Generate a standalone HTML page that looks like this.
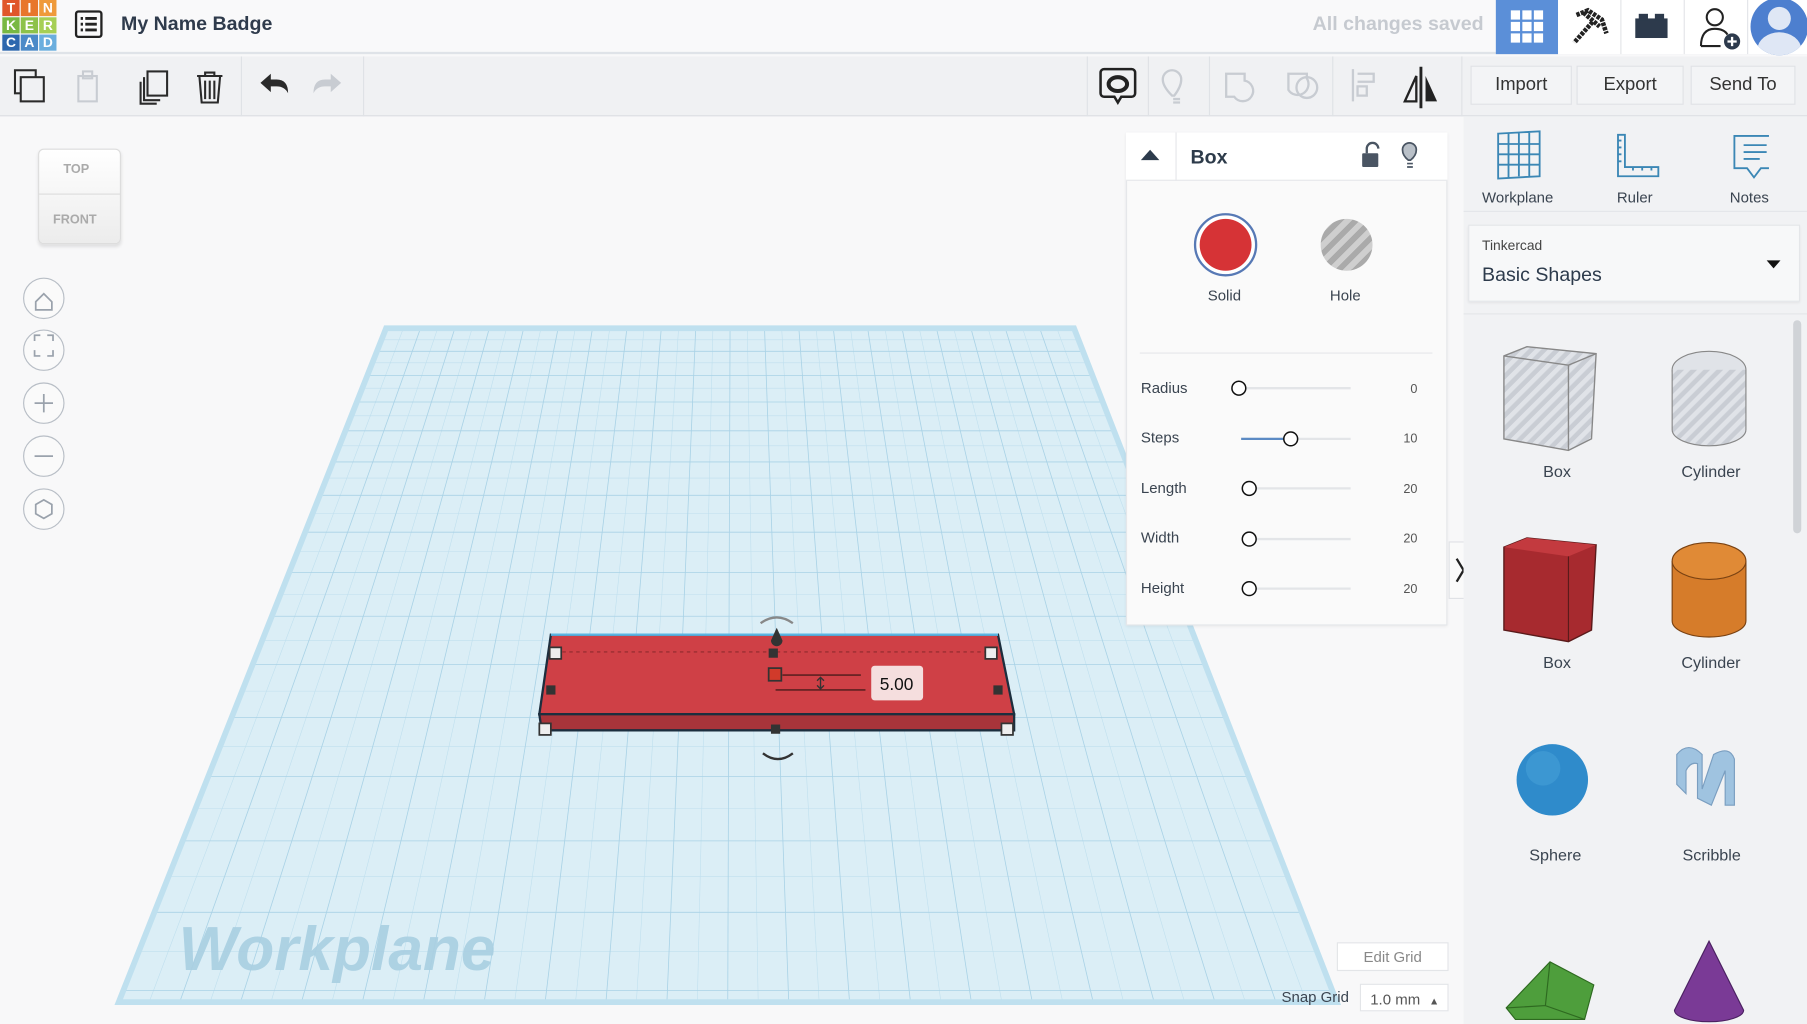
<!DOCTYPE html>
<html><head><meta charset="utf-8"><style>
*{box-sizing:border-box;margin:0;padding:0}
html,body{width:1807px;height:1024px;overflow:hidden;background:#f7f7f8}
#c{position:absolute;left:0;top:0;width:1568px;height:889px;transform:scale(1.15242,1.1519);transform-origin:0 0;font-family:"Liberation Sans",sans-serif;color:#2d3b4a;background:#f8f8f9}
.a{position:absolute}
.bar1{left:0;top:0;width:1568px;height:47px;background:#f9f9fa;border-bottom:2px solid #dfe3e8}
.bar2{left:0;top:49px;width:1568px;height:52px;background:#f0f1f3;border-bottom:1px solid #dcdfe3}
.btn{position:absolute;top:57px;height:34px;border:1px solid #e0e2e6;background:#f3f4f6;font-size:16px;text-align:center;line-height:32px;color:#333}
.lbl{font-size:13px;color:#3a4450}
.nav{position:absolute;left:20px;width:36px;height:36px;border:1px solid #b8bec6;border-radius:50%;background:#fafafa}
</style></head><body><div id="c">
<div class="a bar1"></div>
<div class="a" style="left:2px;top:0;width:48px;height:45px;font:bold 12px 'Liberation Sans',sans-serif;color:#fff">
<div class="a" style="left:0;top:0;width:15px;height:14px;background:#e0562b;text-align:center">T</div>
<div class="a" style="left:16px;top:0;width:15px;height:14px;background:#e8762b;text-align:center">I</div>
<div class="a" style="left:32px;top:0;width:15px;height:14px;background:#ef9a3a;text-align:center">N</div>
<div class="a" style="left:0;top:15px;width:15px;height:14px;background:#78b843;text-align:center">K</div>
<div class="a" style="left:16px;top:15px;width:15px;height:14px;background:#8dc24a;text-align:center">E</div>
<div class="a" style="left:32px;top:15px;width:15px;height:14px;background:#a6cf55;text-align:center">R</div>
<div class="a" style="left:0;top:30px;width:15px;height:14px;background:#2d67ae;text-align:center">C</div>
<div class="a" style="left:16px;top:30px;width:15px;height:14px;background:#4b8ac8;text-align:center">A</div>
<div class="a" style="left:32px;top:30px;width:15px;height:14px;background:#6aaede;text-align:center">D</div>
</div>
<svg class="a" style="left:64px;top:8px" width="26" height="26" viewBox="0 0 26 26"><rect x="2" y="2" width="22" height="22" rx="2" fill="none" stroke="#222" stroke-width="2"/><g stroke="#222" stroke-width="2.5"><line x1="6" y1="8" x2="8" y2="8"/><line x1="10" y1="8" x2="20" y2="8"/><line x1="6" y1="13" x2="8" y2="13"/><line x1="10" y1="13" x2="20" y2="13"/><line x1="6" y1="18" x2="8" y2="18"/><line x1="10" y1="18" x2="20" y2="18"/></g></svg>
<div class="a" style="left:105px;top:11px;font-size:17px;font-weight:bold;color:#2f3b4c">My Name Badge</div>
<div class="a" style="left:1139px;top:11px;font-size:17px;font-weight:bold;color:#c6cad0">All changes saved</div>
<div class="a" style="left:1298px;top:0;width:54px;height:47px;background:#5b8fd8"></div>
<svg class="a" style="left:1310px;top:8px" width="30" height="30"><g fill="#fff"><rect x="1" y="1" width="8" height="8"/><rect x="11" y="1" width="8" height="8"/><rect x="21" y="1" width="8" height="8"/><rect x="1" y="11" width="8" height="8"/><rect x="11" y="11" width="8" height="8"/><rect x="21" y="11" width="8" height="8"/><rect x="1" y="21" width="8" height="8"/><rect x="11" y="21" width="8" height="8"/><rect x="21" y="21" width="8" height="8"/></g></svg>
<div class="a" style="left:1352px;top:0;width:216px;height:47px;background:#fff"></div>
<svg class="a" style="left:1360px;top:5px" width="38" height="36"><path d="M8 8 L18 4 L30 12 L34 24 M14 6 L28 18 M22 14 L6 32" stroke="#222" stroke-width="4" fill="none" stroke-dasharray="3 1"/></svg>
<div class="a" style="left:1406px;top:0;width:1px;height:47px;background:#e3e5e8"></div>
<svg class="a" style="left:1418px;top:10px" width="30" height="24"><rect x="1" y="6" width="28" height="17" fill="#2d3a4c"/><rect x="4" y="2" width="8" height="6" fill="#2d3a4c"/><rect x="18" y="2" width="8" height="6" fill="#2d3a4c"/></svg>
<div class="a" style="left:1461px;top:0;width:1px;height:47px;background:#e3e5e8"></div>
<svg class="a" style="left:1474px;top:4px" width="38" height="40"><circle cx="14" cy="11" r="7" fill="none" stroke="#222" stroke-width="1.8"/><path d="M2 36 Q2 21 14 21 Q22 21 25 26" fill="none" stroke="#222" stroke-width="1.8"/><path d="M2 36 H19" stroke="#222" stroke-width="1.8"/><circle cx="29" cy="32" r="7" fill="#2d3a4c"/><path d="M29 28v8M25 32h8" stroke="#fff" stroke-width="2"/></svg>
<div class="a" style="left:1516px;top:0;width:1px;height:47px;background:#e3e5e8"></div>
<div class="a" style="left:1519px;top:-2px;width:50px;height:50px;border-radius:50%;background:#4d7fcf;overflow:hidden"><div class="a" style="left:15px;top:8px;width:20px;height:20px;border-radius:50%;background:#dfe7f5"></div><div class="a" style="left:6px;top:30px;width:38px;height:30px;border-radius:50%;background:#dfe7f5"></div></div>

<div class="a bar2"></div>
<svg class="a" style="left:10px;top:58px" width="300" height="34" viewBox="0 0 300 34">
<g fill="none" stroke="#2a2a2a" stroke-width="1.8">
<rect x="3" y="3" width="18" height="20"/><rect x="8" y="9" width="20" height="21" fill="#f0f1f3"/>
<rect x="118" y="4" width="17" height="21"/><path d="M115 9v20h14M112 13v19h14"/>
<path d="M161 8h22M168 8v-3h8v3M163 8l2 23h14l2-23M168 12v16M172 12v16M176 12v16"/>
</g>
<g fill="none" stroke="#c8ccd2" stroke-width="1.8"><rect x="58" y="8" width="16" height="22"/><rect x="62" y="4" width="8" height="6"/></g>
<path d="M216 14 l9-8v5h5q10 0 10 12q-3-6-10-6h-5v5z" fill="#2a2a2a"/>
<path d="M286 14 l-9-8v5h-5q-10 0-10 12q3-6 10-6h5v5z" fill="#c8ccd2"/>
</svg>
<div class="a" style="left:209px;top:49px;width:1px;height:52px;background:#dfe2e6"></div>
<div class="a" style="left:315px;top:49px;width:1px;height:52px;background:#dfe2e6"></div>
<div class="a" style="left:943px;top:49px;width:1px;height:52px;background:#dfe2e6"></div>
<svg class="a" style="left:950px;top:56px" width="320" height="40">
<path d="M8 4h24a3 3 0 0 1 3 3v18a3 3 0 0 1-3 3h-9l-3 5-3-5h-9a3 3 0 0 1-3-3v-18a3 3 0 0 1 3-3z" fill="none" stroke="#222" stroke-width="2.2"/>
<ellipse cx="20" cy="17" rx="8" ry="6" fill="none" stroke="#222" stroke-width="3.5"/>
<g fill="none" stroke="#c8ccd2" stroke-width="2"><path d="M67 27q-8-8-8-14a8 8 0 0 1 16 0q0 6-6 14zM68 30h6M68 33h6"/>
<path d="M114 8h16v6a9 9 0 1 1-9 14h-7z"/><path d="M168 8h16v4a8 8 0 1 1-16 10z"/><circle cx="184" cy="20" r="9"/>
<path d="M224 4v28M228 8h14v7h-14M228 19h8v8h-8z"/></g>
<path d="M283 2v36" stroke="#222" stroke-width="2.5"/><path d="M279 32l-10 0 10-22z" fill="none" stroke="#222" stroke-width="2"/><path d="M287 32l10 0-10-22z" fill="#222"/>
</svg>
<div class="a" style="left:996px;top:49px;width:1px;height:52px;background:#dfe2e6"></div>
<div class="a" style="left:1049px;top:49px;width:1px;height:52px;background:#dfe2e6"></div>
<div class="a" style="left:1156px;top:49px;width:1px;height:52px;background:#dfe2e6"></div>
<div class="a" style="left:1268px;top:49px;width:1px;height:52px;background:#dfe2e6"></div>
<div class="btn" style="left:1276px;width:88px">Import</div>
<div class="btn" style="left:1368px;width:93px">Export</div>
<div class="btn" style="left:1467px;width:91px">Send To</div>

<svg class="a" style="left:0;top:101px" width="1270" height="788" viewBox="0 101 1270 788">
<defs><clipPath id="tp"><polygon points="335,285 932,285 1160,870 103,870"/></clipPath></defs>
<polygon points="335,285 932,285 1160,870 103,870" fill="#dbeef6"/>
<g clip-path="url(#tp)" stroke="#bfdfee" stroke-width="0.5">
<line x1="350" y1="285" x2="129.4" y2="870"/><line x1="379.8" y1="285" x2="182.3" y2="870"/><line x1="409.7" y1="285" x2="235.1" y2="870"/><line x1="439.5" y1="285" x2="288" y2="870"/><line x1="469.4" y1="285" x2="340.8" y2="870"/><line x1="499.2" y1="285" x2="393.7" y2="870"/><line x1="529.1" y1="285" x2="446.5" y2="870"/><line x1="558.9" y1="285" x2="499.4" y2="870"/><line x1="588.8" y1="285" x2="552.2" y2="870"/><line x1="618.6" y1="285" x2="605.1" y2="870"/><line x1="648.5" y1="285" x2="657.9" y2="870"/><line x1="678.3" y1="285" x2="710.8" y2="870"/><line x1="708.2" y1="285" x2="763.6" y2="870"/><line x1="738" y1="285" x2="816.5" y2="870"/><line x1="767.9" y1="285" x2="869.3" y2="870"/><line x1="797.7" y1="285" x2="922.2" y2="870"/><line x1="827.6" y1="285" x2="975" y2="870"/><line x1="857.4" y1="285" x2="1027.9" y2="870"/><line x1="887.3" y1="285" x2="1080.7" y2="870"/><line x1="917.1" y1="285" x2="1133.6" y2="870"/>
<line x1="0" y1="295" x2="1270" y2="295"/><line x1="0" y1="315" x2="1270" y2="315"/><line x1="0" y1="337" x2="1270" y2="337"/><line x1="0" y1="361" x2="1270" y2="361"/><line x1="0" y1="387" x2="1270" y2="387"/><line x1="0" y1="415" x2="1270" y2="415"/><line x1="0" y1="446" x2="1270" y2="446"/><line x1="0" y1="479" x2="1270" y2="479"/><line x1="0" y1="516" x2="1270" y2="516"/><line x1="0" y1="556" x2="1270" y2="556"/><line x1="0" y1="600" x2="1270" y2="600"/><line x1="0" y1="648" x2="1270" y2="648"/><line x1="0" y1="702" x2="1270" y2="702"/><line x1="0" y1="761" x2="1270" y2="761"/><line x1="0" y1="826" x2="1270" y2="826"/>
</g>
<g clip-path="url(#tp)" stroke="#a9d2e6" stroke-width="0.7">
<line x1="364.9" y1="285" x2="155.9" y2="870"/><line x1="394.7" y1="285" x2="208.7" y2="870"/><line x1="424.6" y1="285" x2="261.6" y2="870"/><line x1="454.4" y1="285" x2="314.4" y2="870"/><line x1="484.3" y1="285" x2="367.3" y2="870"/><line x1="514.1" y1="285" x2="420.1" y2="870"/><line x1="544" y1="285" x2="473" y2="870"/><line x1="573.8" y1="285" x2="525.8" y2="870"/><line x1="603.7" y1="285" x2="578.7" y2="870"/><line x1="633.5" y1="285" x2="631.5" y2="870"/><line x1="663.4" y1="285" x2="684.4" y2="870"/><line x1="693.2" y1="285" x2="737.2" y2="870"/><line x1="723.1" y1="285" x2="790.1" y2="870"/><line x1="752.9" y1="285" x2="842.9" y2="870"/><line x1="782.8" y1="285" x2="895.8" y2="870"/><line x1="812.6" y1="285" x2="948.6" y2="870"/><line x1="842.5" y1="285" x2="1001.5" y2="870"/><line x1="872.3" y1="285" x2="1054.3" y2="870"/><line x1="902.2" y1="285" x2="1107.2" y2="870"/>
<line x1="0" y1="305" x2="1270" y2="305"/><line x1="0" y1="326" x2="1270" y2="326"/><line x1="0" y1="349" x2="1270" y2="349"/><line x1="0" y1="374" x2="1270" y2="374"/><line x1="0" y1="401" x2="1270" y2="401"/><line x1="0" y1="430" x2="1270" y2="430"/><line x1="0" y1="462" x2="1270" y2="462"/><line x1="0" y1="497" x2="1270" y2="497"/><line x1="0" y1="535" x2="1270" y2="535"/><line x1="0" y1="577" x2="1270" y2="577"/><line x1="0" y1="623" x2="1270" y2="623"/><line x1="0" y1="674" x2="1270" y2="674"/><line x1="0" y1="730" x2="1270" y2="730"/><line x1="0" y1="792" x2="1270" y2="792"/><line x1="0" y1="860" x2="1270" y2="860"/>
</g>
<polygon points="335,285 932,285 1160,870 103,870" fill="none" stroke="#bfe0ef" stroke-width="5"/>
<text x="155" y="842" font-family="Liberation Sans,sans-serif" font-size="54" font-weight="bold" font-style="italic" fill="#a9cfe2" opacity="0.9">Workplane</text>
<polygon points="478,551 866,551 880,620 468,620" fill="#cf4046" stroke="#1c2e3e" stroke-width="2"/>
<polygon points="468,620 880,620 880,634 470,634" fill="#a8343a" stroke="#1c2e3e" stroke-width="2"/>
<path d="M478 551 h388" stroke="#5bb5e3" stroke-width="2"/>
<line x1="482" y1="566" x2="860" y2="566" stroke="#8f2a2e" stroke-dasharray="3 3"/>
<g fill="#eee" stroke="#333" stroke-width="1.5"><rect x="477" y="562" width="10" height="10"/><rect x="855" y="562" width="10" height="10"/><rect x="468" y="628" width="10" height="10"/><rect x="869" y="628" width="10" height="10"/></g>
<g fill="#333"><rect x="667" y="563" width="8" height="8"/><rect x="474" y="595" width="8" height="8"/><rect x="862" y="595" width="8" height="8"/><rect x="669" y="629" width="8" height="8"/><path d="M669 556 L674 545 L679 556 A5 5 0 0 1 669 556z"/></g>
<rect x="667" y="580" width="11" height="11" fill="#d13a2a" stroke="#333" stroke-width="1.5"/>
<path d="M679 586h68M673 599h78" stroke="#4a1a1a" stroke-width="1.2"/>
<path d="M712 588v10M709 591l3-3 3 3M709 595l3 3 3-3" stroke="#333" stroke-width="1.2" fill="none"/>
<rect x="756" y="578" width="45" height="30" rx="3" fill="#f5dede"/>
<text x="778" y="599" text-anchor="middle" font-family="Liberation Sans,sans-serif" font-size="15" fill="#111">5.00</text>
<path d="M660 541q14-10 28 0" stroke="#888" stroke-width="2" fill="none"/>
<path d="M662 654q13 10 26 0" stroke="#333" stroke-width="2" fill="none"/>
</svg>

<div class="a" style="left:33px;top:129px;width:72px;height:83px;background:linear-gradient(#fff,#ececec);border:1px solid #ddd;border-radius:5px;box-shadow:0 2px 3px rgba(0,0,0,.1)"></div>
<div class="a" style="left:33px;top:168px;width:72px;height:1px;background:#ddd"></div>
<div class="a" style="left:55px;top:141px;font-size:11px;font-weight:bold;color:#aaa">TOP</div>
<div class="a" style="left:46px;top:185px;font-size:11px;font-weight:bold;color:#aaa">FRONT</div>
<div class="nav" style="top:241px"></div><div class="nav" style="top:286px"></div><div class="nav" style="top:332px"></div><div class="nav" style="top:378px"></div><div class="nav" style="top:424px"></div>
<svg class="a" style="left:20px;top:241px" width="36" height="220" fill="none" stroke="#9aa2ac" stroke-width="1.5">
<path d="M11 21l7-7 7 7v7h-14z"/><path d="M10 55v-5h5M26 55v-5h-5M10 63v5h5M26 63v5h-5"/><path d="M18 101v16M10 109h16"/><path d="M10 155h16"/><path d="M18 193l7 4v8l-7 4-7-4v-8z"/></svg>

<div class="a" style="left:977px;top:115px;width:279px;height:428px;background:#fafafa;border:1px solid #e5e7ea;box-shadow:0 1px 3px rgba(0,0,0,.08)"></div>
<div class="a" style="left:977px;top:115px;width:279px;height:42px;background:#fff;border-bottom:1px solid #e5e7ea"></div>
<div class="a" style="left:1020px;top:115px;width:1px;height:42px;background:#e5e7ea"></div>
<svg class="a" style="left:988px;top:127px" width="20" height="14"><path d="M2 12L10 3 18 12z" fill="#2d3b4c"/></svg>
<div class="a" style="left:1033px;top:127px;font-size:17px;font-weight:bold">Box</div>
<svg class="a" style="left:1180px;top:123px" width="60" height="26"><path d="M6 10V6a5 5 0 0 1 10 0" fill="none" stroke="#4a5563" stroke-width="2"/><rect x="2" y="10" width="14" height="12" rx="1" fill="#4a5563"/><path d="M42 16q-5-4-5-9a6 6 0 0 1 12 0q0 5-5 9zM41 19h5M41 22h5" fill="#b9c0c8" stroke="#4a5563" stroke-width="1.5"/></svg>
<div class="a" style="left:1036px;top:185px;width:55px;height:55px;border-radius:50%;border:2px solid #5779b5;background:#fff"></div>
<div class="a" style="left:1041px;top:190px;width:45px;height:45px;border-radius:50%;background:#d63336"></div>
<div class="a" style="left:1146px;top:190px;width:45px;height:45px;border-radius:50%;background:repeating-linear-gradient(135deg,#aaa 0 5px,#cfcfcf 5px 10px)"></div>
<div class="a lbl" style="left:1048px;top:249px">Solid</div>
<div class="a lbl" style="left:1154px;top:249px">Hole</div>
<div class="a" style="left:989px;top:306px;width:254px;height:1px;background:#e6e8eb"></div>
<div class="a lbl" style="left:990px;top:329px">Radius</div><div class="a lbl" style="left:990px;top:372px">Steps</div><div class="a lbl" style="left:990px;top:416px">Length</div><div class="a lbl" style="left:990px;top:459px">Width</div><div class="a lbl" style="left:990px;top:503px">Height</div>
<svg class="a" style="left:1065px;top:320px" width="175" height="205" font-family="Liberation Sans,sans-serif" font-size="11" fill="#555">
<g stroke="#e3e5e8" stroke-width="2"><line x1="10" y1="17" x2="107" y2="17"/><line x1="12" y1="61" x2="107" y2="61"/><line x1="18" y1="104" x2="107" y2="104"/><line x1="18" y1="148" x2="107" y2="148"/><line x1="18" y1="191" x2="107" y2="191"/></g>
<line x1="12" y1="61" x2="50" y2="61" stroke="#5b8ac4" stroke-width="2"/>
<g fill="#fff" stroke="#111" stroke-width="1.3"><circle cx="10" cy="17" r="6"/><circle cx="55" cy="61" r="6"/><circle cx="19" cy="104" r="6"/><circle cx="19" cy="148" r="6"/><circle cx="19" cy="191" r="6"/></g>
<text x="165" y="21" text-anchor="end">0</text><text x="165" y="64" text-anchor="end">10</text><text x="165" y="108" text-anchor="end">20</text><text x="165" y="151" text-anchor="end">20</text><text x="165" y="195" text-anchor="end">20</text>
</svg>
<div class="a" style="left:1257px;top:470px;width:20px;height:50px;background:#fafafa;border:1px solid #e0e2e6"></div>
<svg class="a" style="left:1261px;top:483px" width="12" height="24"><path d="M3 2l6 10-6 10" fill="none" stroke="#222" stroke-width="2"/></svg>
<div class="a" style="left:1160px;top:818px;width:97px;height:25px;border:1px solid #e3e5e8;background:#fff;font-size:13px;color:#888;text-align:center;line-height:23px">Edit Grid</div>
<div class="a lbl" style="left:1112px;top:858px">Snap Grid</div>
<div class="a" style="left:1180px;top:854px;width:77px;height:24px;border:1px solid #e3e5e8;background:#fff;font-size:13px;color:#555;padding:5px 0 0 8px">1.0 mm <span style="font-size:9px;margin-left:4px">&#9650;</span></div>

<div class="a" style="left:1270px;top:101px;width:298px;height:788px;background:#f1f2f4"></div>
<div class="a" style="left:1270px;top:183px;width:298px;height:1px;background:#e4e6e9"></div>
<svg class="a" style="left:1295px;top:112px" width="240" height="48" fill="none" stroke="#3b87b5" stroke-width="1.6">
<path d="M5 4l36-2v39l-36 2z M14 4v38M23 3v38M32 3v38M5 13h36M5 22h36M5 31h36"/>
<path d="M109 5h6v28h29v8h-35z M109 10h3M109 16h3M109 22h3M109 28h3M122 33v3M130 33v3M138 33v3"/>
<path d="M210 6h36v28h-13l-6 8-6-8h-11z M218 14h20M218 20h20M218 26h14"/>
</svg>
<div class="a lbl" style="left:1286px;top:164px">Workplane</div>
<div class="a lbl" style="left:1403px;top:164px">Ruler</div>
<div class="a lbl" style="left:1501px;top:164px">Notes</div>
<div class="a" style="left:1274px;top:195px;width:288px;height:67px;background:#f7f8f9;border:1px solid #e4e6e9;box-shadow:0 1px 2px rgba(0,0,0,.06)"></div>
<div class="a" style="left:1286px;top:206px;font-size:12px;color:#444">Tinkercad</div>
<div class="a" style="left:1286px;top:229px;font-size:17px;color:#2d3b4c">Basic Shapes</div>
<svg class="a" style="left:1532px;top:224px" width="14" height="10"><path d="M1 2h12L7 9z" fill="#111"/></svg>
<div class="a" style="left:1270px;top:272px;width:298px;height:1px;background:#e4e6e9"></div>
<div class="a" style="left:1556px;top:278px;width:7px;height:185px;border-radius:4px;background:#d0d3d7"></div>
<svg class="a" style="left:1295px;top:295px" width="240" height="594">
<defs><pattern id="st" width="8" height="8" patternUnits="userSpaceOnUse" patternTransform="rotate(45)"><rect width="8" height="8" fill="#c9cdd4"/><rect width="4" height="8" fill="#e0e3e8"/></pattern></defs>
<path d="M10 14l20-8 60 6-4 74-20 10-56-10z" fill="url(#st)" stroke="#888" stroke-width="1.2"/><path d="M10 14l56 8 24-10M66 22v74" fill="none" stroke="#888" stroke-width="1.2"/>
<ellipse cx="188" cy="26" rx="32" ry="16" fill="#e0e3e8" stroke="#888"/><path d="M156 26v52a32 14 0 0 0 64 0v-52" fill="url(#st)" stroke="#888"/>
<path d="M10 180l20-8 60 6-4 74-20 10-56-10z" fill="#a72a2f" stroke="#5a1a1a" stroke-width="1.2"/><path d="M10 180l20-8 60 6-24 10z" fill="#c33a3f"/><path d="M66 188v74" stroke="#5a1a1a"/>
<path d="M156 192v52a32 14 0 0 0 64 0v-52" fill="#d67c2a" stroke="#7a4212"/><ellipse cx="188" cy="192" rx="32" ry="16" fill="#e08a36" stroke="#7a4212"/>
<circle cx="52" cy="382" r="31" fill="#2f8bcb"/><circle cx="44" cy="372" r="15" fill="#4aa3da" opacity=".5"/>
<path d="M160 360q10-12 22 0v30l10-30q14-8 18 4v40h-8v-30l-12 30-12-6v-30q-6-2-10 6v20l-8-8z" fill="#9fc3e0" stroke="#7a9ec0"/>
<path d="M12 580l38-40 38 20-8 30h-60z" fill="#4e9e3c" stroke="#2e6a20"/><path d="M50 540l-4 38 34 12M46 578l-34 2" stroke="#2e6a20" fill="none"/>
<path d="M188 522l-30 60a30 10 0 0 0 60 0z" fill="#7a3a96" stroke="#4a2060"/>
</svg>
<div class="a lbl" style="left:1339px;top:401px;font-size:14px">Box</div>
<div class="a lbl" style="left:1459px;top:401px;font-size:14px">Cylinder</div>
<div class="a lbl" style="left:1339px;top:567px;font-size:14px">Box</div>
<div class="a lbl" style="left:1459px;top:567px;font-size:14px">Cylinder</div>
<div class="a lbl" style="left:1327px;top:734px;font-size:14px">Sphere</div>
<div class="a lbl" style="left:1460px;top:734px;font-size:14px">Scribble</div>
</div></body></html>
